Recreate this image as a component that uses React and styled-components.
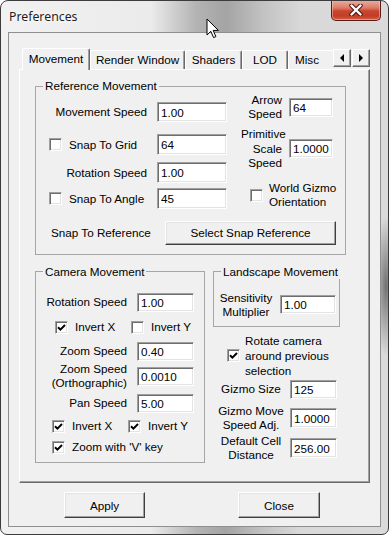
import styled, { createGlobalStyle } from "styled-components";

const GlobalStyle = createGlobalStyle`
  html, body { margin: 0; padding: 0; background: #fff; }
  body {
    font-family: "Liberation Sans", Arial, sans-serif;
    font-size: 11.7px;
    color: #000;
  }
  #root { width: 389px; height: 535px; }
`;

function Check({ on }) {
  return (
    <Box>
      {on && (
        <svg width="9" height="9" viewBox="0 0 9 9">
          <path d="M1 4.2 L3.4 6.6 L8 2" stroke="#000" strokeWidth="2" fill="none" />
        </svg>
      )}
    </Box>
  );
}

function CheckItem({ on, w, gap = 7, children }) {
  return (
    <Item $w={w} $gap={gap}>
      <Check on={on} />
      <span>{children}</span>
    </Item>
  );
}

function Arrow({ dir }) {
  return (
    <ArrowBtn>
      <svg width="5" height="8" viewBox="0 0 5 8">
        {dir === "left" ? <path d="M4 0 L0 4 L4 8 Z" fill="#000" /> : <path d="M0 0 L4 4 L0 8 Z" fill="#000" />}
      </svg>
    </ArrowBtn>
  );
}

export default function App() {
  return (
    <>
      <GlobalStyle />
      <Window>
        <TitleBar>
          <Title>Preferences</Title>
          <CloseBtn>
            <svg width="14" height="12" viewBox="0 0 14 12">
              <path d="M2.5 1.5 L11.5 10.5 M11.5 1.5 L2.5 10.5" stroke="#4a1a12" strokeWidth="4.4" strokeLinecap="round" />
              <path d="M2.5 1.5 L11.5 10.5 M11.5 1.5 L2.5 10.5" stroke="#fff" strokeWidth="2.4" strokeLinecap="round" />
            </svg>
          </CloseBtn>
        </TitleBar>

        <Client>
          <TabStrip>
            <TabList>
              <Tab $w={68} $active>Movement</Tab>
              <Tab $w={95}>Render Window</Tab>
              <Tab $w={57}>Shaders</Tab>
              <Tab $w={46}>LOD</Tab>
              <Tab $w={52} $pr={14}>Misc</Tab>
            </TabList>
            <Arrows>
              <Arrow dir="left" />
              <Arrow dir="right" />
            </Arrows>
          </TabStrip>

          <Panel>
            <Group $w={311} $pb={9}>
              <Legend>Reference Movement</Legend>
              <RefBody>
                <Column>
                  <Row $mt={9} $h={20}>
                    <Label $w={111}>Movement Speed</Label>
                    <Field $w={70} $h={20} defaultValue="1.00" />
                  </Row>
                  <Row $mt={12} $h={21}>
                    <CheckCell $w={111} $pl={13}>
                      <CheckItem>Snap To Grid</CheckItem>
                    </CheckCell>
                    <Field $w={70} $h={21} defaultValue="64" />
                  </Row>
                  <Row $mt={7} $h={21}>
                    <Label $w={111}>Rotation Speed</Label>
                    <Field $w={70} $h={21} defaultValue="1.00" />
                  </Row>
                  <Row $mt={5} $h={21}>
                    <CheckCell $w={111} $pl={13}>
                      <CheckItem>Snap To Angle</CheckItem>
                    </CheckCell>
                    <Field $w={70} $h={21} defaultValue="45" />
                  </Row>
                </Column>
                <Column>
                  <Row $gap={7}>
                    <Label $w={41}>
                      Arrow
                      <br />
                      Speed
                    </Label>
                    <Field $w={44} defaultValue="64" />
                  </Row>
                  <Row $mt={6} $gap={7}>
                    <Label $w={41} $lh={14.5}>
                      Primitive
                      <br />
                      Scale
                      <br />
                      Speed
                    </Label>
                    <Field $w={44} defaultValue="1.0000" />
                  </Row>
                  <Row $mt={10} $pl={9}>
                    <CheckItem gap={6}>
                      <Lines $lh={14.5}>
                        World Gizmo
                        <br />
                        Orientation
                      </Lines>
                    </CheckItem>
                  </Row>
                </Column>
                <SnapRow>
                  <Label $w={114} $align="left">Snap To Reference</Label>
                  <Button $w={171} $h={24}>Select Snap Reference</Button>
                </SnapRow>
              </RefBody>
            </Group>

            <Lower>
              <Group $w={170} $pb={2}>
                <Legend>Camera Movement</Legend>
                <Row $mt={14} $h={19}>
                  <Label $w={91}>Rotation Speed</Label>
                  <Field $w={57} defaultValue="1.00" />
                </Row>
                <Row $mt={9} $h={13} $pl={19} $gap={0}>
                  <CheckItem on w={76}>Invert X</CheckItem>
                  <CheckItem>Invert Y</CheckItem>
                </Row>
                <Row $mt={8} $h={19}>
                  <Label $w={91}>Zoom Speed</Label>
                  <Field $w={57} defaultValue="0.40" />
                </Row>
                <Row $mt={1}>
                  <Label $w={91} $lh={14.5}>
                    Zoom Speed
                    <br />
                    (Orthographic)
                  </Label>
                  <Field $w={57} defaultValue="0.0010" />
                </Row>
                <Row $mt={3} $h={19}>
                  <Label $w={91}>Pan Speed</Label>
                  <Field $w={57} defaultValue="5.00" />
                </Row>
                <Row $mt={7} $h={13} $pl={16} $gap={0}>
                  <CheckItem on w={76}>Invert X</CheckItem>
                  <CheckItem on>Invert Y</CheckItem>
                </Row>
                <Row $mt={8} $h={13} $pl={16}>
                  <CheckItem on>Zoom with 'V' key</CheckItem>
                </Row>
              </Group>

              <Side>
                <Group $w={127} $pb={7}>
                  <Legend>Landscape Movement</Legend>
                  <Row $mt={12} $pl={4} $gap={6}>
                    <Label $w={56} $align="center">
                      Sensitivity
                      <br />
                      Multiplier
                    </Label>
                    <Field $w={56} defaultValue="1.00" />
                  </Row>
                </Group>
                <Row $mt={6} $pl={14}>
                  <CheckItem on gap={5}>
                    <Lines $lh={15}>
                      Rotate camera
                      <br />
                      around previous
                      <br />
                      selection
                    </Lines>
                  </CheckItem>
                </Row>
                <Row $mt={2} $h={19} $pl={4} $gap={5}>
                  <Label $w={68} $align="center">Gizmo Size</Label>
                  <Field $w={47} defaultValue="125" />
                </Row>
                <Row $mt={5} $pl={4} $gap={5}>
                  <Label $w={68} $align="center" $lh={14.5}>
                    Gizmo Move
                    <br />
                    Speed Adj.
                  </Label>
                  <Field $w={47} $h={20} defaultValue="1.0000" />
                </Row>
                <Row $mt={1} $pl={4} $gap={5}>
                  <Label $w={68} $align="center" $lh={14.5}>
                    Default Cell
                    <br />
                    Distance
                  </Label>
                  <Field $w={47} $h={20} defaultValue="256.00" />
                </Row>
              </Side>
            </Lower>
          </Panel>

          <Footer>
            <Button $w={81} $h={26}>Apply</Button>
            <Button $w={82} $h={26}>Close</Button>
          </Footer>
        </Client>

        <Cursor width="14" height="22" viewBox="0 0 14 22">
          <path
            d="M1 1 L1 17 L4.8 13.3 L7.6 19.6 L9.9 18.6 L7.2 12.4 L12.4 12.4 Z"
            fill="#fff"
            stroke="#000"
            strokeWidth="1"
            strokeLinejoin="round"
          />
        </Cursor>
      </Window>
    </>
  );
}

const Window = styled.div`
  position: relative;
  box-sizing: border-box;
  width: 389px;
  height: 535px;
  border: 1px solid #3c3c3c;
  border-radius: 8px 8px 7px 7px;
  overflow: hidden;
  display: flex;
  flex-direction: column;
  background:
    radial-gradient(12px 70px at 385px 285px, rgba(95, 95, 95, 0.85), rgba(95, 95, 95, 0)),
    linear-gradient(90deg, #f1f1f1 0, #ebebeb 150px, #b4b4b4 195px, #a4a4a4 225px, #c2c2c2 262px, #d9d9d9 300px, #dadada 100%);
`;

const TitleBar = styled.div`
  flex-shrink: 0;
  height: 31px;
  display: flex;
  align-items: flex-start;
`;

const Title = styled.span`
  margin: 7px 0 0 8px;
  font-family: "Noto Sans", "Liberation Sans", sans-serif;
  font-size: 12.3px;
  line-height: 17px;
  color: #1e1e1e;
  text-shadow: 0 0 6px #fff, 0 0 3px #fff;
`;

const CloseBtn = styled.div`
  box-sizing: border-box;
  margin: -1px 7px 0 auto;
  width: 50px;
  height: 21px;
  border: 1px solid #5a1b12;
  border-top: none;
  border-radius: 0 0 5px 5px;
  background: linear-gradient(#eab0a4 0, #dd7a66 40%, #c9452e 55%, #c23d27 80%, #d4604a 100%);
  box-shadow: inset 0 0 0 1px rgba(255, 220, 210, 0.45);
  display: flex;
  align-items: center;
  justify-content: center;
`;

const Client = styled.div`
  flex: 1;
  margin: 0 7px 7px;
  border: 1px solid #8f8f8f;
  background: #f0f0f0;
  padding: 15px 10px 0;
  display: flex;
  flex-direction: column;
`;

const TabStrip = styled.div`
  position: relative;
  z-index: 1;
  height: 22px;
  margin-bottom: -1px;
  display: flex;
  align-items: flex-start;
`;

const TabList = styled.div`
  flex: 1;
  height: 100%;
  overflow: hidden;
  display: flex;
  align-items: flex-end;
  padding-left: 3px;
`;

const Tab = styled.div`
  box-sizing: border-box;
  flex-shrink: 0;
  width: ${(p) => p.$w}px;
  height: ${(p) => (p.$active ? 22 : 19)}px;
  margin-bottom: ${(p) => (p.$active ? 0 : 1)}px;
  padding: 0 ${(p) => p.$pr || 0}px ${(p) => (p.$active ? 3 : 1)}px 0;
  background: #f0f0f0;
  border: 1px solid;
  border-bottom: none;
  border-color: #fff #696969 #fff #fff;
  border-radius: 2px 2px 0 0;
  box-shadow: inset -1px 0 0 #a0a0a0;
  display: flex;
  align-items: center;
  justify-content: center;
  white-space: nowrap;
`;

const Arrows = styled.div`
  margin-top: 1px;
  display: flex;
  gap: 1px;
`;

const ArrowBtn = styled.div`
  box-sizing: border-box;
  width: 18px;
  height: 18px;
  background: #f0f0f0;
  border: 1px solid;
  border-color: #fff #696969 #696969 #fff;
  box-shadow: inset -1px -1px 0 #a0a0a0;
  display: flex;
  align-items: center;
  justify-content: center;
`;

const Panel = styled.div`
  box-sizing: border-box;
  height: 414px;
  border: 1px solid;
  border-color: #fff #696969 #696969 #fff;
  box-shadow: inset -1px -1px 0 #a0a0a0;
  padding: 9px 23px 0 15px;
`;

const Group = styled.fieldset`
  box-sizing: border-box;
  width: ${(p) => p.$w}px;
  min-width: 0;
  margin: 0;
  padding: 0 0 ${(p) => p.$pb}px;
  border: 1px solid #a6a6a6;
`;

const Legend = styled.legend`
  margin-left: 7px;
  padding: 0 2px;
  line-height: 14px;
  white-space: nowrap;
`;

const RefBody = styled.div`
  display: grid;
  grid-template-columns: 205px 1fr;
`;

const Column = styled.div`
  display: flex;
  flex-direction: column;
`;

const Row = styled.div`
  display: flex;
  align-items: center;
  height: ${(p) => (p.$h ? `${p.$h}px` : "auto")};
  margin-top: ${(p) => p.$mt || 0}px;
  padding-left: ${(p) => p.$pl || 0}px;
  gap: ${(p) => p.$gap ?? 10}px;
`;

const SnapRow = styled.div`
  grid-column: 1 / -1;
  display: flex;
  align-items: center;
  height: 24px;
  margin-top: 11px;
  padding-left: 15px;
`;

const Label = styled.div`
  flex-shrink: 0;
  width: ${(p) => p.$w}px;
  text-align: ${(p) => p.$align || "right"};
  line-height: ${(p) => p.$lh || 14}px;
  white-space: nowrap;
`;

const CheckCell = styled.div`
  flex-shrink: 0;
  box-sizing: border-box;
  width: ${(p) => p.$w}px;
  padding-left: ${(p) => p.$pl}px;
`;

const Lines = styled.span`
  display: block;
  line-height: ${(p) => p.$lh}px;
  white-space: nowrap;
`;

const Item = styled.div`
  display: flex;
  align-items: center;
  gap: ${(p) => p.$gap}px;
  width: ${(p) => (p.$w ? `${p.$w}px` : "auto")};
  flex-shrink: 0;
  line-height: 14px;
  white-space: nowrap;
`;

const Box = styled.span`
  box-sizing: border-box;
  flex-shrink: 0;
  width: 13px;
  height: 13px;
  background: #fff;
  border: 1px solid;
  border-color: #a0a0a0 #fff #fff #a0a0a0;
  box-shadow: inset 1px 1px 0 #6d6d6d, inset -1px -1px 0 #e3e3e3;
  display: flex;
  align-items: center;
  justify-content: center;
`;

const Field = styled.input`
  box-sizing: border-box;
  flex-shrink: 0;
  width: ${(p) => p.$w}px;
  height: ${(p) => p.$h || 19}px;
  margin: 0;
  padding: 0 0 0 3px;
  font: inherit;
  color: #000;
  background: #fff;
  border: 1px solid;
  border-color: #a0a0a0 #fff #fff #a0a0a0;
  box-shadow: inset 1px 1px 0 #6d6d6d, inset -1px -1px 0 #e3e3e3;
  outline: none;
`;

const Button = styled.button`
  box-sizing: border-box;
  flex-shrink: 0;
  width: ${(p) => p.$w}px;
  height: ${(p) => p.$h}px;
  margin: 0;
  padding: 0;
  font: inherit;
  color: #000;
  background: #f0f0f0;
  border: 1px solid;
  border-color: #fff #404040 #404040 #fff;
  box-shadow: inset -1px -1px 0 #a0a0a0, inset 1px 1px 0 #e3e3e3;
`;

const Lower = styled.div`
  display: flex;
  gap: 8px;
  margin-top: 10px;
`;

const Side = styled.div`
  display: flex;
  flex-direction: column;
`;

const Footer = styled.div`
  display: flex;
  gap: 93px;
  margin-top: 9px;
  padding-left: 45px;
`;

const Cursor = styled.svg`
  position: absolute;
  left: 205px;
  top: 17px;
`;
